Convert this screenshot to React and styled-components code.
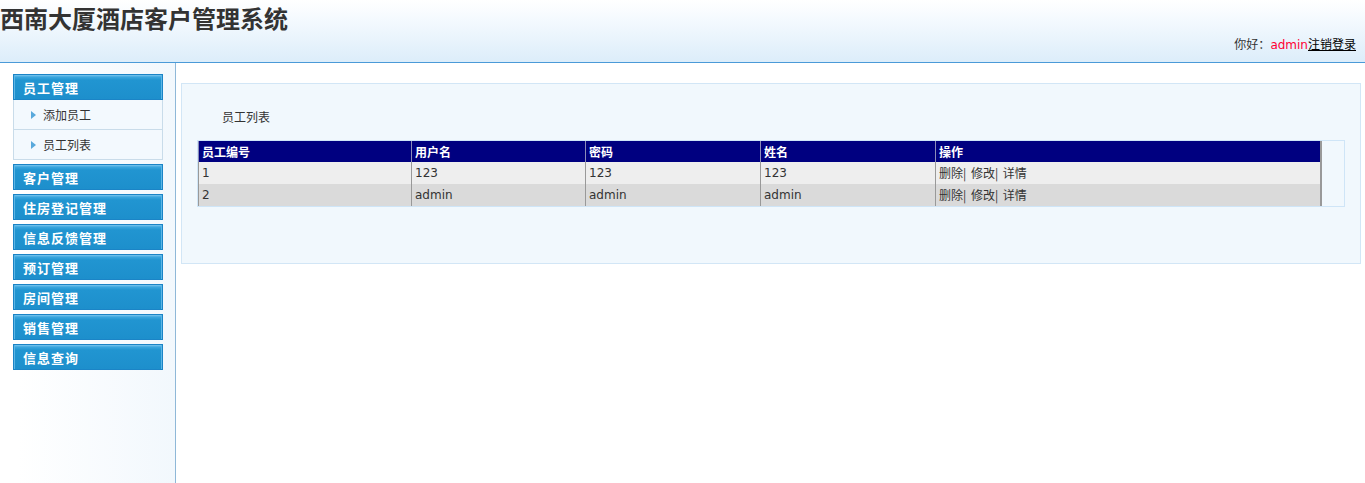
import React from 'react';
import styled, { createGlobalStyle } from 'styled-components';

const GlobalStyle = createGlobalStyle`
  html, body {
    margin: 0;
    padding: 0;
    height: 100%;
    background: #fff;
    font-family: "DejaVu Sans", "Noto Sans CJK SC", sans-serif;
    font-size: 12px;
    color: #333;
  }
  #root {
    height: 100%;
  }
`;

const Page = styled.div`
  display: flex;
  flex-direction: column;
  height: 483px;
  overflow: hidden;
`;

const Header = styled.div`
  height: 62px;
  flex-shrink: 0;
  background: linear-gradient(to bottom, #ffffff 0%, #f3f9fe 35%, #dcedfa 100%);
  border-bottom: 1px solid #4a9ad8;
  display: flex;
  flex-direction: column;
  justify-content: space-between;
`;

const SiteTitle = styled.h1`
  margin: 0;
  padding: 2px 0 0 0;
  font-family: "Noto Sans CJK SC", sans-serif;
  font-size: 24px;
  line-height: 32px;
  font-weight: bold;
  color: #333;
`;

const Greeting = styled.div`
  align-self: flex-end;
  padding: 0 9px 9px 0;
  font-size: 12px;
  line-height: 16px;
  color: #333;
`;

const UserName = styled.span`
  color: #ff0033;
`;

const Logout = styled.a`
  color: #000;
  text-decoration: underline;
`;

const Body = styled.div`
  flex: 1;
  display: flex;
`;

const Sidebar = styled.div`
  width: 176px;
  flex-shrink: 0;
  border-right: 1px solid #8fb8d8;
  background: linear-gradient(to right, #ffffff 10%, #f2f8fd 100%);
  padding: 11px 0 0 13px;
  box-sizing: border-box;
  display: flex;
  flex-direction: column;
  gap: 4px;
`;

const MenuGroup = styled.div`
  width: 150px;
`;

const MenuButton = styled.div`
  height: 26px;
  box-sizing: border-box;
  border: 1px solid #1b84c6;
  background: linear-gradient(to bottom, #7cc6ee 0px, #3aa6de 2px, #2195d1 5px, #1d8fcc 100%);
  color: #fff;
  font-family: "Noto Sans CJK SC", sans-serif;
  font-weight: bold;
  font-size: 13px;
  letter-spacing: 1px;
  line-height: 25px;
  padding-left: 9px;
  box-shadow: inset 1px 0 0 #5cb6e6, inset -1px 0 0 #5cb6e6;
`;

const SubList = styled.div`
  border: 1px solid #c9dcea;
  border-top: none;
  background: #f3f9fe;
`;

const SubItem = styled.div`
  height: 29px;
  display: flex;
  align-items: center;
  padding-left: 17px;
  font-family: "Noto Sans CJK SC", sans-serif;
  font-size: 12px;
  color: #333;
  border-top: ${(p) => (p.first ? 'none' : '1px solid #c9dcea')};
`;

const Arrow = styled.span`
  width: 0;
  height: 0;
  border-top: 4px solid transparent;
  border-bottom: 4px solid transparent;
  border-left: 5px solid #59a9dc;
  margin-right: 7px;
`;

const Main = styled.div`
  flex: 1;
  padding: 20px 4px 0 5px;
`;

const Panel = styled.div`
  height: 181px;
  box-sizing: border-box;
  background: #f1f8fd;
  border: 1px solid #d2e6f6;
  padding: 24px 15px 0 15px;
`;

const PanelTitle = styled.div`
  padding-left: 25px;
  font-family: "Noto Sans CJK SC", sans-serif;
  font-size: 12px;
  line-height: 18px;
  margin-bottom: 14px;
`;

const TableFrame = styled.div`
  border: 1px solid #cfe5f7;
  width: 1148px;
  box-sizing: border-box;
`;

const Table = styled.div`
  width: 1122px;
  border-right: 2px solid #999;
  display: grid;
  grid-template-columns: 213px 174px 175px 175px 385px;
`;

const Cell = styled.div`
  height: ${(p) => (p.head ? '21px' : '22px')};
  line-height: ${(p) => (p.head ? '21px' : '22px')};
  box-sizing: border-box;
  padding-left: 3px;
  border-left: ${(p) => (p.head ? '1px solid #8c8cb8' : '1px solid #999')};
  background: ${(p) => (p.head ? '#000080' : p.alt ? '#dadada' : '#eeeeee')};
  color: ${(p) => (p.head ? '#fff' : '#333')};
  font-family: ${(p) => (p.head ? '"Noto Sans CJK SC", sans-serif' : 'inherit')};
  font-weight: ${(p) => (p.head ? 'bold' : 'normal')};
  font-size: 12px;
  white-space: nowrap;
  overflow: hidden;
`;

const Ops = styled.span`
  font-family: "Noto Sans CJK SC", sans-serif;
  word-spacing: 2px;
`;

const menus = ['客户管理', '住房登记管理', '信息反馈管理', '预订管理', '房间管理', '销售管理', '信息查询'];
const columns = ['员工编号', '用户名', '密码', '姓名', '操作'];
const rows = [
  ['1', '123', '123', '123'],
  ['2', 'admin', 'admin', 'admin'],
];

export default function App() {
  return (
    <Page>
      <GlobalStyle />
      <Header>
        <SiteTitle>西南大厦酒店客户管理系统</SiteTitle>
        <Greeting>
          <Ops>你好：</Ops>
          <UserName>admin</UserName>
          <Logout>
            <Ops>注销登录</Ops>
          </Logout>
        </Greeting>
      </Header>
      <Body>
        <Sidebar>
          <MenuGroup>
            <MenuButton>员工管理</MenuButton>
            <SubList>
              <SubItem first>
                <Arrow />
                添加员工
              </SubItem>
              <SubItem>
                <Arrow />
                员工列表
              </SubItem>
            </SubList>
          </MenuGroup>
          {menus.map((m) => (
            <MenuGroup key={m}>
              <MenuButton>{m}</MenuButton>
            </MenuGroup>
          ))}
        </Sidebar>
        <Main>
          <Panel>
            <PanelTitle>员工列表</PanelTitle>
            <TableFrame>
              <Table>
                {columns.map((c) => (
                  <Cell head key={c}>
                    {c}
                  </Cell>
                ))}
                {rows.map((r, i) => (
                  <React.Fragment key={r[0]}>
                    {r.map((v, j) => (
                      <Cell alt={i % 2 === 1} key={j}>
                        {v}
                      </Cell>
                    ))}
                    <Cell alt={i % 2 === 1}>
                      <Ops>删除| 修改| 详情</Ops>
                    </Cell>
                  </React.Fragment>
                ))}
              </Table>
            </TableFrame>
          </Panel>
        </Main>
      </Body>
    </Page>
  );
}
